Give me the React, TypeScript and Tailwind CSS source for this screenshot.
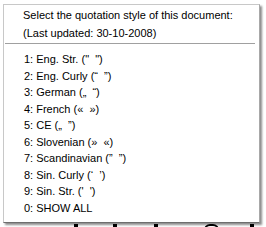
const items = [
  '1: Eng. Str. ("  ")',
  '2: Eng. Curly (\u201c  \u201d)',
  '3: German (\u201e  \u201c)',
  '4: French (\u00ab  \u00bb)',
  '5: CE (\u201e  \u201d)',
  '6: Slovenian (\u00bb  \u00ab)',
  '7: Scandinavian (\u201d  \u201d)',
  '8: Sin. Curly (\u2018  \u2019)',
  "9: Sin. Str. ('  ')",
  '0: SHOW ALL',
]

export default function App() {
  return (
    <div className="w-[266px] h-[227px] bg-white overflow-hidden font-['Liberation_Sans',Arial,sans-serif] text-[11px] text-black">
      <div className="pl-[3px] pt-[4px]">
        <div className="w-[257px] h-[219px] bg-white border border-t-[#c8c8c8] border-l-[#c8c8c8] border-r-[#a8a8a8] border-b-[#6e6e6e] shadow-[2px_2px_2px_rgba(0,0,0,0.45)]">
          <div className="pl-[19px] pt-[1px] leading-[18px]">
            <div>Select the quotation style of this document:</div>
            <div>(Last updated: 30-10-2008)</div>
          </div>
          <div className="mt-[1px] ml-[1px] mr-[4px] h-px bg-[#a0a0a0]" />
          <ul className="pl-[20px] pt-[7px] leading-[16.5px]">
            {items.map((item) => (
              <li key={item} className="whitespace-pre">
                {item}
              </li>
            ))}
          </ul>
        </div>
      </div>
      <div className="flex h-[4px] mt-[1px]">
        <div className="w-[74px]" />
        <div className="w-[4px] bg-black" />
        <div className="w-[35px]" />
        <div className="w-[4px] bg-black" />
        <div className="w-[37px]" />
        <div className="w-[4px] bg-black" />
        <div className="w-[46px]" />
        <div className="w-[15px] h-[12px] rounded-full border-2 border-black" />
        <div className="w-[31px]" />
        <div className="w-[4px] bg-black" />
      </div>
    </div>
  )
}
